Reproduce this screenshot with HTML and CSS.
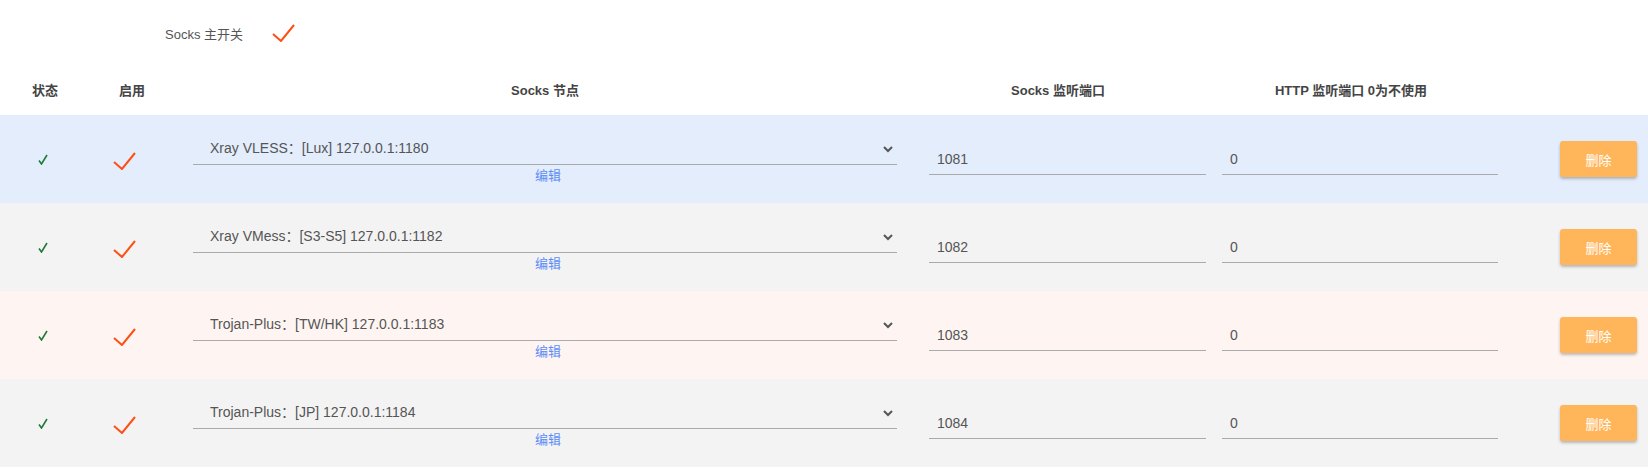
FILE: index.html
```html
<!DOCTYPE html>
<html lang="zh-CN">
<head>
    <meta charset="UTF-8">
    <title>Socks</title>
    <link rel="stylesheet" href="styles.css">
</head>
<body>
    <div class="master">
        <span class="master-label">Socks 主开关</span>
        <svg class="tick" width="23" height="18" viewBox="0 0 23 18"><polyline points="1,10 9,17 22,1" /></svg>
    </div>

    <div class="table">
        <div class="row head">
            <div class="cell">状态</div>
            <div class="cell">启用</div>
            <div class="cell">Socks 节点</div>
            <div class="cell h-port">Socks 监听端口</div>
            <div class="cell h-http">HTTP 监听端口 0为不使用</div>
            <div class="cell"></div>
        </div>

        <div class="row blue">
            <div class="cell"><svg class="ok" width="10" height="11" viewBox="0 0 10 11"><path d="M1 6.5 L3.5 10 L9 1" /></svg></div>
            <div class="cell"><svg class="tick" width="23" height="18" viewBox="0 0 23 18"><polyline points="1,10 9,17 22,1" /></svg></div>
            <div class="cell node">
                <div class="select-wrap">
                    <select class="select"><option>Xray VLESS：[Lux] 127.0.0.1:1180</option></select>
                    <svg class="chevron" width="10" height="7" viewBox="0 0 10 7"><polyline points="1,1 5,5 9,1" /></svg>
                </div>
                <a class="edit" href="#">编辑</a>
            </div>
            <div class="cell port"><input class="field" type="text" value="1081"></div>
            <div class="cell http"><input class="field" type="text" value="0"></div>
            <div class="cell action"><button class="del">删除</button></div>
        </div>

        <div class="row gray">
            <div class="cell"><svg class="ok" width="10" height="11" viewBox="0 0 10 11"><path d="M1 6.5 L3.5 10 L9 1" /></svg></div>
            <div class="cell"><svg class="tick" width="23" height="18" viewBox="0 0 23 18"><polyline points="1,10 9,17 22,1" /></svg></div>
            <div class="cell node">
                <div class="select-wrap">
                    <select class="select"><option>Xray VMess：[S3-S5] 127.0.0.1:1182</option></select>
                    <svg class="chevron" width="10" height="7" viewBox="0 0 10 7"><polyline points="1,1 5,5 9,1" /></svg>
                </div>
                <a class="edit" href="#">编辑</a>
            </div>
            <div class="cell port"><input class="field" type="text" value="1082"></div>
            <div class="cell http"><input class="field" type="text" value="0"></div>
            <div class="cell action"><button class="del">删除</button></div>
        </div>

        <div class="row pink">
            <div class="cell"><svg class="ok" width="10" height="11" viewBox="0 0 10 11"><path d="M1 6.5 L3.5 10 L9 1" /></svg></div>
            <div class="cell"><svg class="tick" width="23" height="18" viewBox="0 0 23 18"><polyline points="1,10 9,17 22,1" /></svg></div>
            <div class="cell node">
                <div class="select-wrap">
                    <select class="select"><option>Trojan-Plus：[TW/HK] 127.0.0.1:1183</option></select>
                    <svg class="chevron" width="10" height="7" viewBox="0 0 10 7"><polyline points="1,1 5,5 9,1" /></svg>
                </div>
                <a class="edit" href="#">编辑</a>
            </div>
            <div class="cell port"><input class="field" type="text" value="1083"></div>
            <div class="cell http"><input class="field" type="text" value="0"></div>
            <div class="cell action"><button class="del">删除</button></div>
        </div>

        <div class="row gray">
            <div class="cell"><svg class="ok" width="10" height="11" viewBox="0 0 10 11"><path d="M1 6.5 L3.5 10 L9 1" /></svg></div>
            <div class="cell"><svg class="tick" width="23" height="18" viewBox="0 0 23 18"><polyline points="1,10 9,17 22,1" /></svg></div>
            <div class="cell node">
                <div class="select-wrap">
                    <select class="select"><option>Trojan-Plus：[JP] 127.0.0.1:1184</option></select>
                    <svg class="chevron" width="10" height="7" viewBox="0 0 10 7"><polyline points="1,1 5,5 9,1" /></svg>
                </div>
                <a class="edit" href="#">编辑</a>
            </div>
            <div class="cell port"><input class="field" type="text" value="1084"></div>
            <div class="cell http"><input class="field" type="text" value="0"></div>
            <div class="cell action"><button class="del">删除</button></div>
        </div>
    </div>
</body>
</html>
```

FILE: styles.css
```css
body {
    margin: 0;
    background-color: #fff;
    font-family: "Liberation Sans", "Noto Sans CJK SC", sans-serif;
    font-size: 13px;
    color: #555;
}
.master {
    display: flex;
    align-items: center;
    height: 66px;
    padding-left: 165px;
    gap: 29px;
}
.master-label {
    color: #555;
}
.tick polyline {
    fill: none;
    stroke: #ff4f14;
    stroke-width: 2;
}
.ok path {
    fill: none;
    stroke: #1f7a3a;
    stroke-width: 1.6;
}
.table {
    display: flex;
    flex-direction: column;
}
.row {
    display: grid;
    grid-template-columns: 90px 84px 742px 298px 292px 1fr;
    height: 88px;
    align-items: center;
}
.row.head {
    height: 49px;
    box-sizing: border-box;
    padding-bottom: 3px;
    font-weight: bold;
    color: #444;
}
.row.blue {
    background-color: #e3edfc;
}
.row.gray {
    background-color: #f3f3f3;
}
.row.pink {
    background-color: #fef5f3;
}
.cell {
    text-align: center;
}
.cell svg {
    display: inline-block;
    vertical-align: middle;
}
.row .cell:nth-child(1) svg {
    margin-left: -5px;
    margin-top: -2px;
}
.row .cell:nth-child(2) svg {
    margin-left: -16px;
    margin-top: 4px;
}
.h-port {
    padding-right: 14px;
}
.h-http {
    padding-right: 18px;
}
.node {
    padding: 0 19px;
}
.select-wrap {
    position: relative;
}
.select {
    appearance: none;
    -webkit-appearance: none;
    display: block;
    width: 100%;
    height: 32px;
    padding: 0 0 0 17px;
    border: none;
    border-bottom: 1px solid #aaa;
    border-radius: 0;
    background: transparent;
    font-family: inherit;
    font-size: 14px;
    color: #555;
    outline: none;
}
.chevron {
    position: absolute;
    right: 4px;
    top: 13px;
}
.chevron polyline {
    fill: none;
    stroke: #555;
    stroke-width: 2;
}
.edit {
    display: block;
    margin-top: 1px;
    padding-left: 6px;
    line-height: 20px;
    font-size: 13px;
    color: #5c8df6;
    text-decoration: none;
}
.port {
    padding: 0 8px 0 13px;
}
.http {
    padding: 0 8px;
}
.field {
    display: block;
    width: 100%;
    box-sizing: border-box;
    height: 32px;
    padding: 0 8px;
    border: none;
    border-bottom: 1px solid #aaa;
    background: transparent;
    font-family: inherit;
    font-size: 14px;
    color: #555;
    outline: none;
}
.action {
    text-align: right;
    padding-right: 11px;
}
.del {
    width: 77px;
    height: 36px;
    border: none;
    border-radius: 3px;
    background-color: #ffb65a;
    color: #fff;
    font-family: inherit;
    font-size: 13px;
    box-shadow: 0 2px 3px rgba(0,0,0,0.25);
    cursor: pointer;
}
```
